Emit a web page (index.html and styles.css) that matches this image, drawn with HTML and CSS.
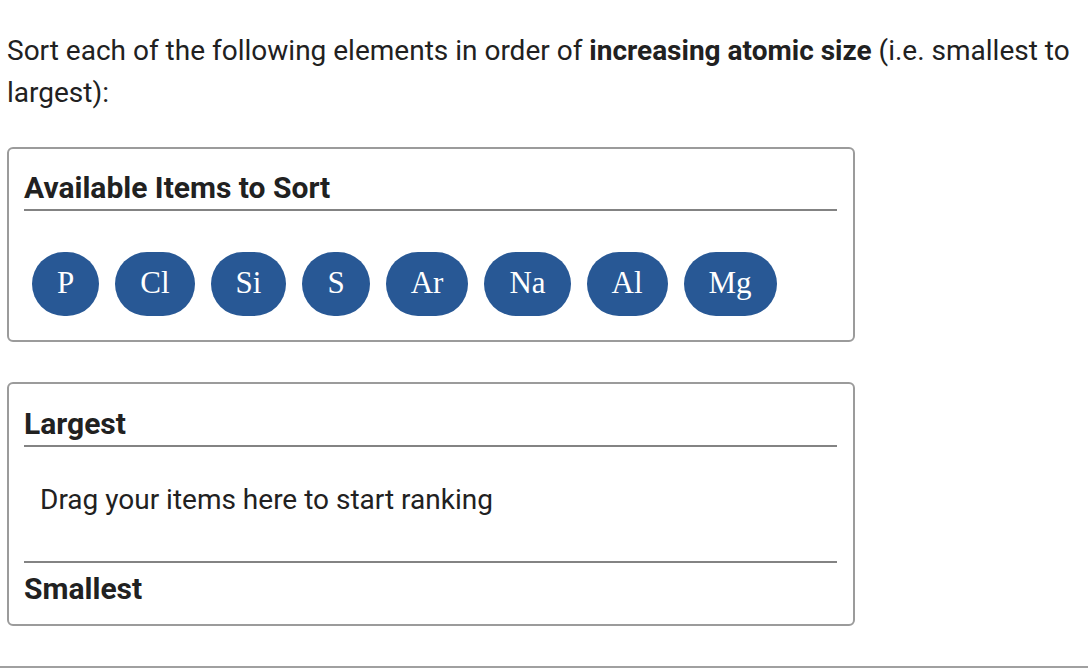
FILE: index.html
```html
<!DOCTYPE html>
<html lang="en">
<head>
<meta charset="utf-8">
<title>Sort by atomic size</title>
<link rel="stylesheet" href="styles.css">
</head>
<body>
<main class="page">
  <p class="prompt">Sort each of the following elements in order of <strong>increasing atomic size</strong> (i.e. smallest to largest):</p>

  <section class="panel">
    <h2 class="panel-title">Available Items to Sort</h2>
    <ul class="chips">
      <li class="chip">P</li>
      <li class="chip">Cl</li>
      <li class="chip">Si</li>
      <li class="chip">S</li>
      <li class="chip">Ar</li>
      <li class="chip">Na</li>
      <li class="chip">Al</li>
      <li class="chip">Mg</li>
    </ul>
  </section>

  <section class="panel rank">
    <h2 class="panel-title">Largest</h2>
    <div class="dropzone">Drag your items here to start ranking</div>
    <h2 class="panel-title foot">Smallest</h2>
  </section>
</main>
<hr class="rule">
</body>
</html>
```
FILE: styles.css
```css
html, body {
  margin: 0;
  padding: 0;
  background: #ffffff;
}

body {
  font-family: Roboto, "Liberation Sans", sans-serif;
  color: #212121;
  width: 1088px;
  height: 668px;
  display: flex;
  flex-direction: column;
}

.page {
  padding: 30px 0 0 7px;
  flex: 1;
}

.prompt {
  margin: 0;
  font-size: 28px;
  line-height: 42px;
}

.prompt strong {
  font-weight: 700;
}

.panel {
  box-sizing: border-box;
  width: 848px;
  margin-top: 33px;
  border: 2px solid #9b9b9b;
  border-radius: 6px;
  padding: 21px 16px 24px 15px;
}

.panel-title {
  margin: 0;
  font-size: 30px;
  font-weight: 700;
  line-height: 36px;
  padding-bottom: 3px;
  border-bottom: 2px solid #838383;
}

.chips {
  list-style: none;
  margin: 41px 0 0 8px;
  padding: 0;
  display: flex;
  gap: 16px;
}

.chip {
  box-sizing: border-box;
  height: 64px;
  line-height: 62px;
  padding: 0 25px;
  border-radius: 32px;
  background: #285895;
  color: #ffffff;
  font-family: "Liberation Serif", "DejaVu Serif", serif;
  font-size: 31px;
}

.rank {
  margin-top: 40px;
  padding: 22px 16px 17px 15px;
}

.dropzone {
  font-size: 28px;
  line-height: 42px;
  padding: 32px 16px 40px 16px;
}

.panel-title.foot {
  border-bottom: none;
  border-top: 2px solid #838383;
  padding: 8px 0 0 0;
}

.rule {
  margin: 0;
  border: none;
  height: 2px;
  background: #a0a0a0;
}
```
